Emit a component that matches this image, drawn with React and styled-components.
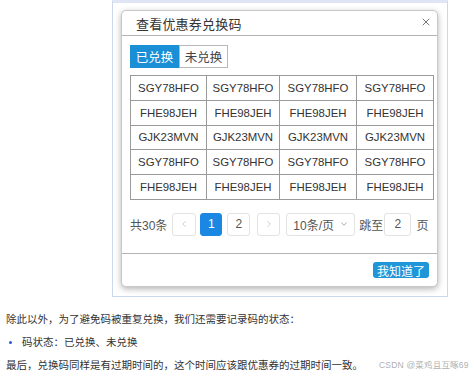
import React from 'react';
import styled, { createGlobalStyle } from 'styled-components';
import { X, ChevronLeft, ChevronRight, ChevronDown } from 'lucide-react';

const GlobalStyle = createGlobalStyle`
  html, body {
    margin: 0;
    padding: 0;
    background: #fff;
  }
  body {
    font-family: "Liberation Sans", "Noto Sans CJK SC", sans-serif;
    color: #333;
  }
`;

const codes = [
  'SGY78HFO',
  'FHE98JEH',
  'GJK23MVN',
  'SGY78HFO',
  'FHE98JEH',
];

const colWidths = [76, 73, 77, 77];

const Page = styled.div`
  width: 474px;
  height: 377px;
  overflow: hidden;
`;

const Frame = styled.div`
  margin-left: 112px;
  width: 336px;
  height: 297px;
  box-sizing: border-box;
  border: 1px solid #cbd6ef;
  border-top: 3px solid #dfe5f5;
  padding: 7px 9px 0 8px;
`;

const Dialog = styled.div`
  width: 317px;
  height: 277px;
  box-sizing: border-box;
  background: #fff;
  border: 1px solid #c8c8c8;
  border-radius: 5px;
  box-shadow: 0 2px 6px rgba(0, 0, 0, 0.3);
  display: flex;
  flex-direction: column;
`;

const Header = styled.div`
  height: 24px;
  display: flex;
  align-items: center;
  justify-content: space-between;
  padding: 0 5px 0 14px;
  border-bottom: 1px solid #b4b4b4;
`;

const Title = styled.div`
  font-size: 13px;
  color: #333;
  letter-spacing: 0.2px;
`;

const Close = styled.span`
  display: flex;
  color: #444;
  margin-top: -3px;
`;

const Body = styled.div`
  padding: 9px 3px 0 8px;
  flex: 1;
`;

const Tabs = styled.div`
  display: flex;
  margin-bottom: 7px;
`;

const Tab = styled.div`
  flex: 0 0 49px;
  height: 23px;
  box-sizing: border-box;
  display: flex;
  align-items: center;
  justify-content: center;
  font-size: 12.5px;
  border: 1px solid ${p => (p.$active ? '#1a8fd6' : '#b8b8b8')};
  background: ${p => (p.$active ? '#1a8fd6' : '#fff')};
  color: ${p => (p.$active ? '#fff' : '#444')};
`;

const Table = styled.table`
  border-collapse: collapse;
  table-layout: fixed;
  width: 303px;
`;

const Cell = styled.td`
  border: 1px solid #9a9a9a;
  height: 23.8px;
  padding: 0;
  text-align: center;
  font-family: "Liberation Sans", sans-serif;
  font-size: 11.4px;
  color: #333;
`;

const Pager = styled.div`
  display: flex;
  align-items: center;
  margin-top: 13px;
  font-size: 12px;
  color: #555;
`;

const Total = styled.span`
  margin-right: 5px;
`;

const PageBtn = styled.div`
  width: ${p => p.$w || 22}px;
  height: 23px;
  box-sizing: border-box;
  margin-right: ${p => p.$gap || 5}px;
  border: 1px solid ${p => (p.$active ? '#1a88e2' : '#e3e3e3')};
  border-radius: 3px;
  background: ${p => (p.$active ? '#1a88e2' : '#fff')};
  color: ${p => (p.$active ? '#fff' : '#555')};
  display: flex;
  align-items: center;
  justify-content: center;
  font-size: 12px;
`;

const Select = styled.div`
  width: 69px;
  height: 23px;
  box-sizing: border-box;
  border: 1px solid #e3e3e3;
  border-radius: 3px;
  display: flex;
  align-items: center;
  justify-content: space-between;
  padding: 0 5px 0 6px;
  margin-right: 4px;
  color: #555;
`;

const JumpInput = styled.div`
  width: 27px;
  height: 23px;
  box-sizing: border-box;
  border: 1px solid #e3e3e3;
  border-radius: 3px;
  display: flex;
  align-items: center;
  justify-content: center;
  margin: 0 5px 0 1px;
  color: #555;
`;

const Footer = styled.div`
  border-top: 1px solid #b4b4b4;
  height: 33px;
  box-sizing: border-box;
  display: flex;
  justify-content: flex-end;
  align-items: flex-start;
  padding: 8px 8px 0 0;
`;

const OkButton = styled.div`
  height: 16px;
  padding: 0 4px;
  border-radius: 3px;
  background: #1f96d8;
  color: #fff;
  font-size: 12px;
  display: flex;
  align-items: center;
`;

const Article = styled.div`
  padding: 11px 0 0 6px;
  font-size: 10.5px;
  color: #333;
`;

const Para = styled.p`
  margin: 0;
  line-height: 23px;
  display: flex;
  align-items: center;
  white-space: nowrap;
`;

const Bullet = styled.span`
  width: 3px;
  height: 3px;
  border-radius: 50%;
  background: #2b57d4;
  margin: 0 10px 0 3px;
`;

const Credit = styled.span`
  margin-left: 16px;
  font-size: 8.5px;
  color: #b0b0b0;
  letter-spacing: 0.2px;
`;

export default function App() {
  return (
    <Page>
      <GlobalStyle />
      <Frame>
        <Dialog>
          <Header>
            <Title>查看优惠券兑换码</Title>
            <Close>
              <X size={12} strokeWidth={1.5} />
            </Close>
          </Header>
          <Body>
            <Tabs>
              <Tab $active>已兑换</Tab>
              <Tab>未兑换</Tab>
            </Tabs>
            <Table>
              <colgroup>
                {colWidths.map((w, i) => (
                  <col key={i} style={{ width: w }} />
                ))}
              </colgroup>
              <tbody>
                {codes.map((code, r) => (
                  <tr key={r}>
                    {colWidths.map((_, c) => (
                      <Cell key={c}>{code}</Cell>
                    ))}
                  </tr>
                ))}
              </tbody>
            </Table>
            <Pager>
              <Total>共30条</Total>
              <PageBtn $w={24} $gap={4}>
                <ChevronLeft size={10} color="#c4c4c4" />
              </PageBtn>
              <PageBtn $active>1</PageBtn>
              <PageBtn $w={23} $gap={7}>2</PageBtn>
              <PageBtn $w={23} $gap={6}>
                <ChevronRight size={10} color="#c4c4c4" />
              </PageBtn>
              <Select>
                <span>10条/页</span>
                <ChevronDown size={10} color="#999" />
              </Select>
              <span>跳至</span>
              <JumpInput>2</JumpInput>
              <span>页</span>
            </Pager>
          </Body>
          <Footer>
            <OkButton>我知道了</OkButton>
          </Footer>
        </Dialog>
      </Frame>
      <Article>
        <Para>除此以外，为了避免码被重复兑换，我们还需要记录码的状态：</Para>
        <Para>
          <Bullet />
          码状态：已兑换、未兑换
        </Para>
        <Para>
          最后，兑换码同样是有过期时间的，这个时间应该跟优惠券的过期时间一致。
          <Credit>CSDN @菜鸡且互啄69</Credit>
        </Para>
      </Article>
    </Page>
  );
}
